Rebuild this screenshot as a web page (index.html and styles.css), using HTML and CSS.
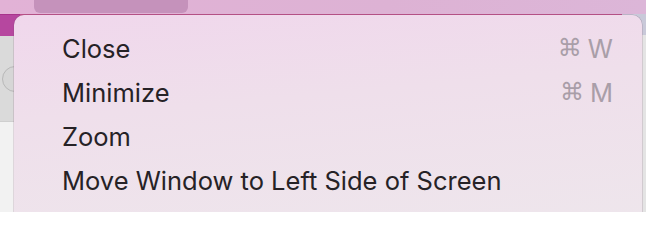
FILE: index.html
```html
<!DOCTYPE html>
<html>
<head>
<meta charset="utf-8">
<link rel="stylesheet" href="styles.css">
</head>
<body>
<div class="desktop">
  <div class="menubar">
    <div class="menu-title"></div>
  </div>
  <div class="windows">
    <div class="win-left">
      <div class="win-left-title"></div>
      <div class="win-left-toolbar"><span class="round-btn"></span></div>
      <div class="win-left-body"></div>
    </div>
    <div class="win-mid"></div>
    <div class="win-right">
      <div class="win-right-title"></div>
      <div class="win-right-body"></div>
    </div>
  </div>
  <div class="menu">
    <div class="item"><span class="label">Close</span><span class="shortcut"><span class="cmd">⌘</span>W</span></div>
    <div class="item"><span class="label">Minimize</span><span class="shortcut"><span class="cmd">⌘</span>M</span></div>
    <div class="item"><span class="label">Zoom</span></div>
    <div class="item"><span class="label">Move Window to Left Side of Screen</span></div>
  </div>
</div>
</body>
</html>
```
FILE: styles.css
```css
html, body {
  margin: 0;
  padding: 0;
  width: 646px;
  height: 212px;
  overflow: hidden;
}
body {
  font-family: "Inter", "Liberation Sans", sans-serif;
}
.desktop {
  position: relative;
  width: 646px;
  height: 212px;
  background: #e6e6e6;
}
.menubar {
  height: 14px;
  background: linear-gradient(90deg, #e2b2d6 0%, #ddb2d4 60%, #dcb6d8 100%);
  position: relative;
}
.menu-title {
  position: absolute;
  left: 34px;
  top: 0;
  width: 154px;
  height: 13px;
  background: #c592bb;
  border-radius: 0 0 6px 6px;
}
.windows {
  display: flex;
  height: 198px;
}
.win-left {
  width: 20px;
  display: flex;
  flex-direction: column;
}
.win-left-title {
  height: 21px;
  background: #b6479f;
  border-top: 1px solid #a8348c;
}
.win-left-toolbar {
  height: 85px;
  background: #dadada;
  position: relative;
}
.round-btn {
  position: absolute;
  left: 2px;
  top: 30px;
  width: 24px;
  height: 24px;
  border-radius: 50%;
  border: 1px solid #b8b8b8;
  background: #d6d6d6;
}
.win-left-body {
  flex: 1;
  background: #f2f2f2;
  border-top: 1px solid #cfcfcf;
}
.win-mid {
  flex: 1;
  background: #c0508a;
}
.win-right {
  width: 24px;
  display: flex;
  flex-direction: column;
}
.win-right-title {
  height: 21px;
  background: #c9c9d9;
}
.win-right-body {
  flex: 1;
  background: #e4e4e4;
}
.menu {
  position: absolute;
  left: 14px;
  top: 15px;
  width: 628px;
  height: 210px;
  box-sizing: border-box;
  padding: 11px 29px 0 48px;
  border-radius: 10px;
  background: linear-gradient(175deg, #f0d7ec 0%, #efdfeb 40%, #eee6ec 100%);
  box-shadow: 0 0 0 0.5px rgba(120, 80, 110, 0.35);
}
.item {
  display: flex;
  justify-content: space-between;
  align-items: center;
  height: 44px;
  font-size: 25.5px;
  color: #262226;
}
.shortcut {
  color: #a99ea8;
  display: flex;
  align-items: center;
}
.cmd {
  font-family: "DejaVu Sans", sans-serif;
  font-size: 24px;
  margin-right: 6px;
}
```
